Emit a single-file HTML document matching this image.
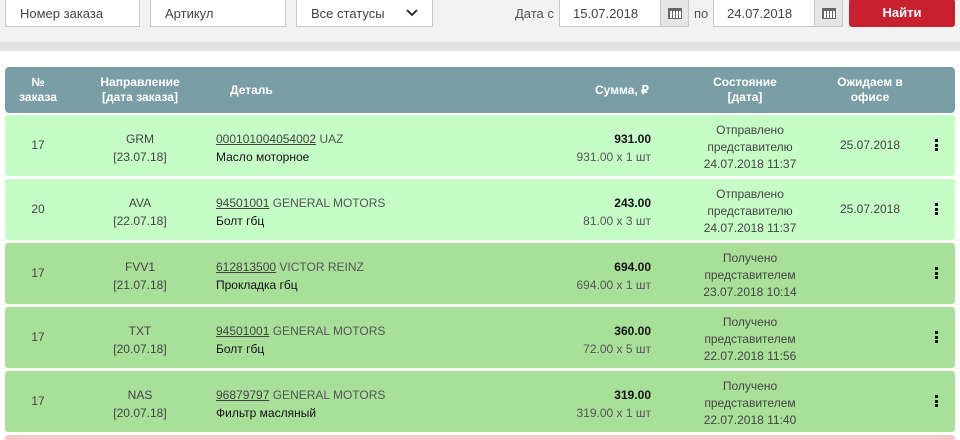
<!DOCTYPE html>
<html><head><meta charset="utf-8"><style>
*{box-sizing:border-box;margin:0;padding:0}
html,body{width:960px;height:440px;overflow:hidden}
body{background:#fff;font-family:"Liberation Sans",sans-serif;font-size:12px;color:#444;position:relative}
.top{position:absolute;left:0;top:0;width:960px;height:42px;background:#f2f2f2}
.strip{position:absolute;left:0;top:42px;width:960px;height:9px;background:#e3e3e3}
.inp{position:absolute;top:-1px;height:28px;background:#fff;border:1px solid #c8c8c8;font-size:13px;color:#444;padding:6px 0 0 14px}
.cal{position:absolute;top:-1px;height:28px;width:29px;background:#e6e6e6;border:1px solid #c8c8c8}
.cal i{position:absolute;left:7px;top:8px;width:14px;height:11px;border:1px solid #666;border-top-width:3px;background:repeating-linear-gradient(90deg,#666 0 1px,#fff 1px 3px)}
.lbl{position:absolute;top:6px;font-size:13px;color:#555}
.btn{position:absolute;left:849px;top:-1px;width:106px;height:28px;background:#c8202f;border-radius:3px;color:#fff;font-weight:bold;font-size:13px;text-align:center;padding-top:6px}
.hdr{position:absolute;left:5px;top:67px;width:950px;height:46px;background:#7b9ea6;border-radius:4px;color:#fff;font-size:12px;font-weight:bold}
.c{position:absolute;text-align:center;line-height:15px}
.row{position:absolute;left:5px;width:950px;height:61px;border-radius:3px}
.l1{background:#c6fcc6}.l2{background:#a8e09a}
.row .c{color:#444}
.det{position:absolute;left:211px;top:15px;line-height:18px;color:#555}
.det u{color:#444}
.det b{color:#111;font-weight:normal}
.sum{position:absolute;right:304px;top:15px;text-align:right;line-height:18px;color:#555}
.sum b{color:#111}
.dots{position:absolute;left:930px;top:24px;width:3px}
.dots i{display:block;width:3px;height:3px;background:#111;margin-bottom:1.5px}
</style></head><body>
<div class="top"></div><div class="strip"></div>
<div class="inp" style="left:5px;width:135px">Номер заказа</div>
<div class="inp" style="left:150px;width:136px">Артикул</div>
<div class="inp" style="left:296px;width:137px;padding-left:14px">Все статусы<svg style="position:absolute;right:14px;top:9px" width="12" height="8"><path d="M1 1l5 5 5-5" stroke="#222" stroke-width="1.8" fill="none"/></svg></div>
<div class="lbl" style="left:515px">Дата с</div>
<div class="inp" style="left:559px;width:102px;padding-left:13px">15.07.2018</div>
<div class="cal" style="left:660px"><i></i></div>
<div class="lbl" style="left:694px">по</div>
<div class="inp" style="left:713px;width:102px;padding-left:13px">24.07.2018</div>
<div class="cal" style="left:814px"><i></i></div>
<div class="btn">Найти</div>

<div class="hdr">
<div class="c" style="left:13px;width:40px;top:8px">№<br>заказа</div>
<div class="c" style="left:85px;width:100px;top:8px">Направление<br>[дата заказа]</div>
<div class="c" style="left:225px;top:16px">Деталь</div>
<div class="c" style="left:590px;top:16px">Сумма, ₽</div>
<div class="c" style="left:690px;width:100px;top:8px">Состояние<br>[дата]</div>
<div class="c" style="left:820px;width:90px;top:8px">Ожидаем в<br>офисе</div>
</div>

<div class="row l1" style="top:115px">
<div class="c" style="left:13px;width:40px;top:23px">17</div>
<div class="c" style="left:85px;width:100px;top:15px;line-height:18px">GRM<br>[23.07.18]</div>
<div class="det"><u>000101004054002</u> UAZ<br><b>Масло моторное</b></div>
<div class="sum"><b>931.00</b><br>931.00 x 1 шт</div>
<div class="c" style="left:680px;width:130px;top:7px;line-height:17px">Отправлено<br>представителю<br>24.07.2018 11:37</div>
<div class="c" style="left:820px;width:90px;top:23px">25.07.2018</div>
<div class="dots"><i></i><i></i><i></i></div>
</div>
<div class="row l1" style="top:179px">
<div class="c" style="left:13px;width:40px;top:23px">20</div>
<div class="c" style="left:85px;width:100px;top:15px;line-height:18px">AVA<br>[22.07.18]</div>
<div class="det"><u>94501001</u> GENERAL MOTORS<br><b>Болт гбц</b></div>
<div class="sum"><b>243.00</b><br>81.00 x 3 шт</div>
<div class="c" style="left:680px;width:130px;top:7px;line-height:17px">Отправлено<br>представителю<br>24.07.2018 11:37</div>
<div class="c" style="left:820px;width:90px;top:23px">25.07.2018</div>
<div class="dots"><i></i><i></i><i></i></div>
</div>
<div class="row l2" style="top:243px">
<div class="c" style="left:13px;width:40px;top:23px">17</div>
<div class="c" style="left:85px;width:100px;top:15px;line-height:18px">FVV1<br>[21.07.18]</div>
<div class="det"><u>612813500</u> VICTOR REINZ<br><b>Прокладка гбц</b></div>
<div class="sum"><b>694.00</b><br>694.00 x 1 шт</div>
<div class="c" style="left:680px;width:130px;top:7px;line-height:17px">Получено<br>представителем<br>23.07.2018 10:14</div>
<div class="dots"><i></i><i></i><i></i></div>
</div>
<div class="row l2" style="top:307px">
<div class="c" style="left:13px;width:40px;top:23px">17</div>
<div class="c" style="left:85px;width:100px;top:15px;line-height:18px">TXT<br>[20.07.18]</div>
<div class="det"><u>94501001</u> GENERAL MOTORS<br><b>Болт гбц</b></div>
<div class="sum"><b>360.00</b><br>72.00 x 5 шт</div>
<div class="c" style="left:680px;width:130px;top:7px;line-height:17px">Получено<br>представителем<br>22.07.2018 11:56</div>
<div class="dots"><i></i><i></i><i></i></div>
</div>
<div class="row l2" style="top:371px">
<div class="c" style="left:13px;width:40px;top:23px">17</div>
<div class="c" style="left:85px;width:100px;top:15px;line-height:18px">NAS<br>[20.07.18]</div>
<div class="det"><u>96879797</u> GENERAL MOTORS<br><b>Фильтр масляный</b></div>
<div class="sum"><b>319.00</b><br>319.00 x 1 шт</div>
<div class="c" style="left:680px;width:130px;top:7px;line-height:17px">Получено<br>представителем<br>22.07.2018 11:40</div>
<div class="dots"><i></i><i></i><i></i></div>
</div>
<div style="position:absolute;left:5px;top:435px;width:950px;height:5px;background:#fcc6c6;border-radius:3px 3px 0 0"></div>
</body></html>
